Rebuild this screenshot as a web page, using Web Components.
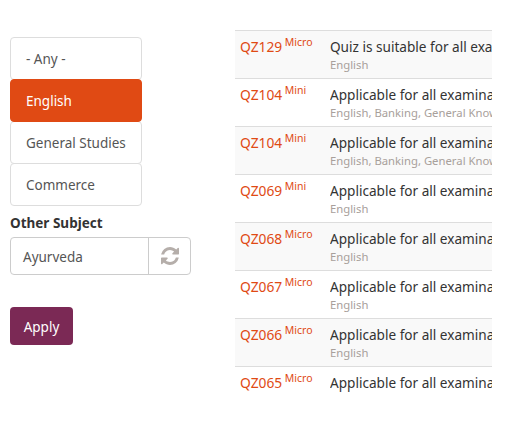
<!DOCTYPE html>
<html>
<head>
<meta charset="utf-8">
<title>Quiz list</title>
<style>
  body { margin: 0; background: #fff; font-family: "Noto Sans", sans-serif; }
</style>
</head>
<body>
<quiz-page>
  <subject-filter slot="side">
    <filter-option>- Any -</filter-option>
    <filter-option active>English</filter-option>
    <filter-option>General Studies</filter-option>
    <filter-option>Commerce</filter-option>
  </subject-filter>
  <quiz-table slot="main">
    <quiz-row code="QZ129" kind="Micro" title="Quiz is suitable for all examinations" tags="English"></quiz-row>
    <quiz-row code="QZ104" kind="Mini" title="Applicable for all examinations" tags="English, Banking, General Knowledge"></quiz-row>
    <quiz-row code="QZ104" kind="Mini" title="Applicable for all examinations" tags="English, Banking, General Knowledge"></quiz-row>
    <quiz-row code="QZ069" kind="Mini" title="Applicable for all examinations" tags="English"></quiz-row>
    <quiz-row code="QZ068" kind="Micro" title="Applicable for all examinations" tags="English"></quiz-row>
    <quiz-row code="QZ067" kind="Micro" title="Applicable for all examinations" tags="English"></quiz-row>
    <quiz-row code="QZ066" kind="Micro" title="Applicable for all examinations" tags="English"></quiz-row>
    <quiz-row code="QZ065" kind="Micro" title="Applicable for all examinations"></quiz-row>
  </quiz-table>
</quiz-page>

<script>
// Page shell: sidebar on the left, quiz table on the right
class QuizPage extends HTMLElement {
  constructor() {
    super();
    this.attachShadow({ mode: 'open' });
    this.shadowRoot.innerHTML = `
    <style>
      :host { display: flex; height: 429px; overflow: hidden; }
      .side { width: 235px; padding: 37px 0 0 10px; box-sizing: border-box; flex: none; }
      .main { width: 257px; padding-top: 30px; flex: none; }
    </style>
    <div class="side"><slot name="side"></slot></div>
    <div class="main"><slot name="main"></slot></div>
    `;
  }
}

class FilterOption extends HTMLElement {
  constructor() {
    super();
    this.attachShadow({ mode: 'open' });
    this.shadowRoot.innerHTML = `
    <style>
      :host {
        display: block;
        box-sizing: border-box;
        height: 43px;
        margin-top: -1px;
        padding: 0 15px;
        line-height: 43px;
        font-size: 13.5px;
        color: #555;
        background: #fff;
        border: 1px solid #ddd;
        border-radius: 4px;
      }
      :host([active]) {
        color: #fff;
        background: #e04a14;
        border-color: #e04a14;
        position: relative;
      }
    </style>
    <slot></slot>
    `;
  }
}

class SubjectFilter extends HTMLElement {
  constructor() {
    super();
    this.attachShadow({ mode: 'open' });
    this.shadowRoot.innerHTML = `
    <style>
      :host { display: block; }
      .options { width: 132px; padding-top: 1px; }
      .label { margin: 6px 0 0; height: 22px; line-height: 22px; font-size: 13.5px; font-weight: 700; color: #333; }
      .group { display: flex; width: 181px; height: 38px; margin-top: 3px; box-sizing: border-box;
        border: 1px solid #ccc; border-radius: 4px; }
      .value { flex: 1; padding-left: 12px; line-height: 38px; font-size: 13.5px; color: #555; }
      .addon { width: 41px; flex: none; display: flex; align-items: center; justify-content: center;
        border-left: 1px solid #ccc; }
      .apply { display: block; width: 63px; height: 38px; margin-top: 32px; padding: 2px 0 0; border: 0; border-radius: 4px;
        background: #7b2955; color: #fff; font: 13.5px "Noto Sans", sans-serif; }
    </style>
    <div class="options"><slot></slot></div>
    <div class="label">Other Subject</div>
    <div class="group">
      <div class="value">Ayurveda</div>
      <div class="addon">
        <svg width="18" height="18" viewBox="0 0 1536 1536" fill="#b5aeaa">
          <path d="M1511 928q0 5-1 7-64 268-268 434.5t-478 166.5q-146 0-282.5-55t-243.5-157l-129 129q-19 19-45 19t-45-19-19-45v-448q0-26 19-45t45-19h448q26 0 45 19t19 45-19 45l-137 137q71 66 161 102t187 36q134 0 250-65t186-179q11-17 53-117 8-23 30-23h192q13 0 22.5 9.5t9.5 22.5zm25-800v448q0 26-19 45t-45 19h-448q-26 0-45-19t-19-45 19-45l138-138q-148-137-349-137-134 0-250 65t-186 179q-11 17-53 117-8 23-30 23h-199q-13 0-22.5-9.5t-9.5-22.5v-7q65-268 270-434.5t480-166.5q146 0 284 55.5t245 156.5l130-129q19-19 45-19t45 19 19 45z"/>
        </svg>
      </div>
    </div>
    <button class="apply">Apply</button>
    `;
  }
}

class QuizTable extends HTMLElement {
  constructor() {
    super();
    this.attachShadow({ mode: 'open' });
    this.shadowRoot.innerHTML = `
    <style>
      :host { display: block; overflow: hidden; }
      ::slotted(quiz-row:nth-child(odd)) { background: #f9f9f9; }
      ::slotted(quiz-row:last-child) { background: #fff; }
    </style>
    <slot></slot>
    `;
  }
}

class QuizRow extends HTMLElement {
  constructor() {
    super();
    this.attachShadow({ mode: 'open' });
  }

  connectedCallback() {
    const tags = this.getAttribute('tags');
    this.shadowRoot.innerHTML = `
    <style>
      :host {
        display: flex;
        box-sizing: border-box;
        height: 48px;
        border-top: 1px solid #ddd;
        white-space: nowrap;
      }
      .code { width: 95px; flex: none; padding: 6px 0 0 5px; box-sizing: border-box; font-size: 13.8px; line-height: 20px; color: #e04a14; }
      .code sup { font-size: 10.5px; line-height: 0; margin-left: -1px; }
      .info { flex: 1; min-width: 0; overflow: hidden; padding-top: 6px; }
      .title { font-size: 13.6px; line-height: 20px; color: #333; }
      .tags { font-size: 11.3px; line-height: 16px; color: #a8a09b; }
    </style>
    <div class="code">${this.getAttribute('code')} <sup>${this.getAttribute('kind')}</sup></div>
    <div class="info">
      <div class="title">${this.getAttribute('title')}</div>
      ${tags ? `<div class="tags">${tags}</div>` : ''}
    </div>
    `;
  }
}

customElements.define('quiz-page', QuizPage);
customElements.define('filter-option', FilterOption);
customElements.define('subject-filter', SubjectFilter);
customElements.define('quiz-table', QuizTable);
customElements.define('quiz-row', QuizRow);
</script>
</body>
</html>
